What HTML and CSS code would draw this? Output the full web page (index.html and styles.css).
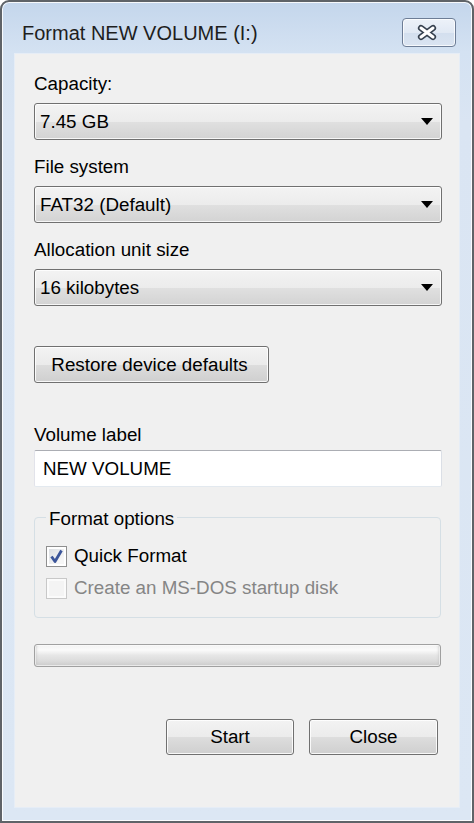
FILE: index.html
```html
<!DOCTYPE html>
<html>
<head>
<meta charset="utf-8">
<title>Format NEW VOLUME (I:)</title>
<link rel="stylesheet" href="styles.css">
</head>
<body>
<div class="window">
  <div class="titlebar">
    <span class="title">Format NEW VOLUME (I:)</span>
    <div class="close-btn">
      <svg width="22" height="17" viewBox="0 0 22 17">
        <path d="M5 4 L17 13 M17 4 L5 13" stroke="#36414f" stroke-width="6.2" stroke-linecap="round" fill="none"/>
        <path d="M5 4 L17 13 M17 4 L5 13" stroke="#ffffff" stroke-width="3" stroke-linecap="round" fill="none"/>
      </svg>
    </div>
  </div>
  <div class="panel">
    <div class="field">
      <div class="label">Capacity:</div>
      <div class="combo"><span>7.45 GB</span><svg class="arrow" width="12" height="7" viewBox="0 0 12 7"><path d="M0 0H12L6 7Z" fill="#000"/></svg></div>
    </div>
    <div class="field">
      <div class="label">File system</div>
      <div class="combo"><span>FAT32 (Default)</span><svg class="arrow" width="12" height="7" viewBox="0 0 12 7"><path d="M0 0H12L6 7Z" fill="#000"/></svg></div>
    </div>
    <div class="field">
      <div class="label">Allocation unit size</div>
      <div class="combo"><span>16 kilobytes</span><svg class="arrow" width="12" height="7" viewBox="0 0 12 7"><path d="M0 0H12L6 7Z" fill="#000"/></svg></div>
    </div>
    <div class="btn btn-restore">Restore device defaults</div>
    <div class="label vol-label">Volume label</div>
    <div class="textbox">NEW VOLUME</div>
    <fieldset class="options">
      <legend>Format options</legend>
      <div class="check-row">
        <span class="checkbox">
          <svg width="19" height="19" viewBox="0 0 19 19"><path d="M4.5 9.5 L8 14.5 L14.5 3.5" stroke="#3b559a" stroke-width="2.8" fill="none" stroke-linejoin="round"/></svg>
        </span>
        <span>Quick Format</span>
      </div>
      <div class="check-row disabled">
        <span class="checkbox"></span>
        <span>Create an MS-DOS startup disk</span>
      </div>
    </fieldset>
    <div class="progress"></div>
    <div class="actions">
      <div class="btn btn-start">Start</div>
      <div class="btn btn-close">Close</div>
    </div>
  </div>
</div>
</body>
</html>
```
FILE: styles.css
```css
* { box-sizing: border-box; }

body {
  margin: 0;
  background: #ffffff;
  font-family: "Liberation Sans", Arial, sans-serif;
  font-size: 18.8px;
  color: #000;
}

.window {
  width: 474px;
  height: 823px;
  border: 2px solid #5f6368;
  border-radius: 9px 9px 0 0;
  padding: 1px;
  background: linear-gradient(#c4d6ec, #d4e2f2 50px, #dae5f3 120px, #dce7f4);
  box-shadow: inset 0 0 0 1px rgba(255, 255, 255, 0.85);
  display: flex;
  flex-direction: column;
}

.titlebar {
  height: 50px;
  display: flex;
  align-items: flex-start;
  padding: 15px 15px 0 19px;
}

.title {
  flex: 1;
  margin-top: 4px;
  font-size: 20px;
  line-height: 22px;
  color: #1e1e1e;
}

.close-btn {
  width: 54px;
  height: 29px;
  border: 1px solid #6d7d96;
  border-radius: 4px;
  background: linear-gradient(#edf2f9, #e1e9f4 50%, #d3dfee 51%, #dae4f1);
  box-shadow: inset 0 0 0 1px rgba(255, 255, 255, 0.75);
  display: flex;
  align-items: center;
  justify-content: center;
  padding-right: 4px;
}

.panel {
  flex: 1;
  margin: 0 11px 12px;
  background: #f0f0f0;
  border: 1px solid #e6edf6;
  padding: 19px 17px 0 19px;
  display: flex;
  flex-direction: column;
}

.label {
  line-height: 22px;
  height: 22px;
}

.field .label {
  margin-bottom: 8px;
}

.field + .field {
  margin-top: 16px;
}

.combo {
  height: 37px;
  border: 1px solid #707070;
  border-radius: 3px;
  background: linear-gradient(#f3f3f3, #ececec 50%, #e0e0e0 51%, #d3d3d3);
  box-shadow: inset 0 0 0 1px rgba(255, 255, 255, 0.8);
  display: flex;
  align-items: center;
  justify-content: space-between;
  padding: 0 8px 0 5px;
  line-height: 22px;
}

.arrow {
  display: block;
}

.btn {
  height: 37px;
  border: 1px solid #707070;
  border-radius: 3px;
  background: linear-gradient(#f3f3f3, #ebebeb 50%, #dddddd 51%, #cfcfcf);
  box-shadow: inset 0 0 0 1px rgba(255, 255, 255, 0.85);
  display: flex;
  align-items: center;
  justify-content: center;
  line-height: 22px;
}

.btn-restore {
  margin-top: 40px;
  width: 235px;
  padding-right: 4px;
}

.vol-label {
  margin-top: 41px;
  margin-bottom: 4px;
}

.textbox {
  height: 37px;
  background: #ffffff;
  border: 1px solid;
  border-color: #abadb3 #dbdfe6 #e3e9ef #e2e3ea;
  border-radius: 2px;
  padding-left: 8px;
  display: flex;
  align-items: center;
  line-height: 22px;
}

.options {
  margin: 18px 1px 0 0;
  padding: 15px 0 18px 11px;
  border: 1px solid #d5dfe5;
  border-radius: 4px;
  min-inline-size: auto;
}

.options legend {
  padding: 3px 3px 0;
  line-height: 22px;
}

.check-row {
  display: flex;
  align-items: center;
  height: 22px;
  gap: 7px;
  line-height: 22px;
}

.check-row + .check-row {
  margin-top: 10px;
}

.checkbox {
  width: 21px;
  height: 21px;
  border: 1px solid #8f8f8f;
  background: linear-gradient(135deg, #d6dadf, #f6f6f6 70%);
  box-shadow: inset 0 0 0 2px #ffffff;
  display: flex;
  align-items: center;
  justify-content: center;
}

.check-row.disabled {
  color: #858585;
}

.check-row.disabled .checkbox {
  border-color: #c8c8c8;
  background: #f4f4f4;
  box-shadow: inset 0 0 0 2px #fbfbfb;
}

.progress {
  margin: 26px 1px 0 0;
  height: 23px;
  border: 1px solid #a0a0a0;
  border-radius: 3px;
  background: linear-gradient(#f2f2f2, #fafafa 25%, #e6e6e6 50%, #dcdcdc 75%, #cbcbcb);
  box-shadow: inset 0 0 0 1px rgba(255, 255, 255, 0.6), inset 3px 0 3px -2px #c0c0c0, inset -3px 0 3px -2px #c0c0c0;
}

.actions {
  margin-top: 52px;
  display: flex;
  justify-content: flex-end;
  gap: 15px;
  padding-right: 4px;
}

.btn-start {
  width: 128px;
  height: 36px;
}

.btn-close {
  width: 129px;
  height: 36px;
}
```
